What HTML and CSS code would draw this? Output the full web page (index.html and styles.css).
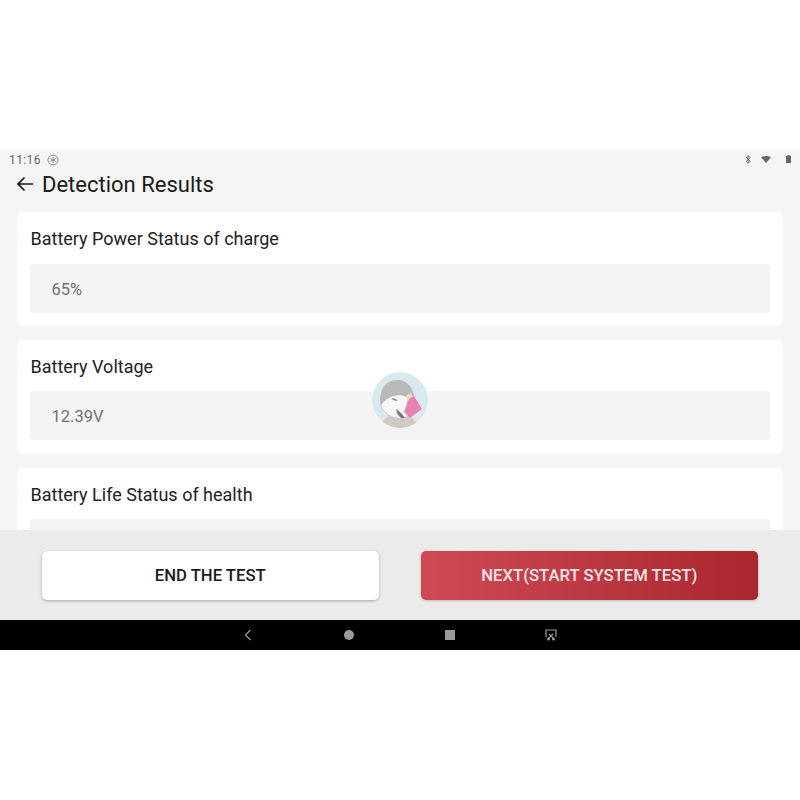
FILE: index.html
```html
<!DOCTYPE html>
<html lang="en">
<head>
  <meta charset="UTF-8" />
  <title>Detection Results</title>
  <meta name="viewport" content="width=device-width, initial-scale=1.0" />
  <link rel="stylesheet" href="styles.css">
</head>
<body>
  <div class="screen">

    <!-- Status bar -->
    <div class="status-bar">
      <div class="status-left">
        <span class="clock">11:16</span>
        <svg class="status-badge" width="12" height="12" viewBox="0 0 12 12">
          <circle cx="6" cy="6" r="5" fill="none" stroke="#888" stroke-width="1"/>
          <path d="M6 3v6M3.500 4.500l5 3M8.500 4.500l-5 3" stroke="#888" stroke-width="1" fill="none"/>
        </svg>
      </div>
      <div class="status-right">
        <svg width="6" height="9" viewBox="0 0 6 9"><path d="M1 2l4 4.500-2 2V.5l2 2L1 7" fill="none" stroke="#666" stroke-width="1"/></svg>
        <svg class="wifi-icon" width="10" height="7" viewBox="0 0 10 7"><path d="M0 1.200Q5-1 10 1.200L5 7z" fill="#666"/></svg>
        <svg width="5" height="8" viewBox="0 0 5 8"><path d="M0 1h1.500V0h2v1H5v7H0z" fill="#666"/></svg>
      </div>
    </div>

    <!-- Header -->
    <div class="header">
      <svg class="back-arrow" width="18" height="16" viewBox="0 0 18 16">
        <path d="M17 8H2M8.500 1.500 2 8l6.500 6.500" fill="none" stroke="#1a1a1a" stroke-width="1.700"/>
      </svg>
      <h1>Detection Results</h1>
    </div>

    <!-- Results -->
    <div class="results">
      <div class="card">
        <div class="card-title">Battery Power Status of charge</div>
        <div class="field">65%</div>
      </div>
      <div class="card">
        <div class="card-title">Battery Voltage</div>
        <div class="field">12.39V</div>
      </div>
      <div class="card">
        <div class="card-title">Battery Life Status of health</div>
        <div class="field"></div>
      </div>
    </div>

    <!-- Buttons -->
    <div class="footer">
      <button class="btn btn-white">END THE TEST</button>
      <button class="btn btn-red">NEXT(START SYSTEM TEST)</button>
    </div>

    <!-- Navigation -->
    <div class="nav-bar">
      <span class="nav-item">
        <svg width="8" height="12" viewBox="0 0 8 12"><path d="M6.500 1 1.500 6l5 5" fill="none" stroke="#999" stroke-width="1.200"/></svg>
      </span>
      <span class="nav-item"><span class="nav-dot"></span></span>
      <span class="nav-item"><span class="nav-square"></span></span>
      <span class="nav-item">
        <svg width="12" height="12" viewBox="0 0 12 12">
          <path d="M1 8V1h10v7" fill="none" stroke="#999" stroke-width="1.200"/>
          <path d="M4 5l4 4M8 5 4 9" stroke="#999" stroke-width="1.200"/>
          <circle cx="3.500" cy="10" r="1.500" fill="#999"/>
          <circle cx="8.500" cy="10" r="1.500" fill="#999"/>
        </svg>
      </span>
    </div>

    <!-- Watermark -->
    <svg class="watermark" width="56" height="56" viewBox="0 0 56 56">
      <defs><clipPath id="disc"><circle cx="28" cy="28" r="28"/></clipPath></defs>
      <g clip-path="url(#disc)">
        <circle cx="28" cy="28" r="28" fill="#d8e9f0"/>
        <path d="M9 56q1-10 9-12h18q8 2 9 12z" fill="#d0cbc2"/>
        <path d="M8 30Q8 9 25 8q13 0 17 15l-6 21H17Q9 38 8 30z" fill="#b9b9b7"/>
        <path d="M9 33q5-7 13-9 9-2 13 2l1 18-8 2q-15-1-19-13z" fill="#f8f7f5"/>
        <path d="M19 27q4-2 7 2-4 0-7-2z" fill="#8b9294"/>
        <path d="M34 24l5-3 2 5-4 8z" fill="#f3dfb4"/>
        <path d="M37 27l5-3 8 13-12 9-6-6z" fill="#ea80b4"/>
        <path d="M24 37q5 3 9 9l-4 0q-4-3-5-9z" fill="#77777a"/>
      </g>
    </svg>
  </div>
</body>
</html>
```

FILE: styles.css
```css
* { margin: 0; padding: 0; box-sizing: border-box; }

body {
  font-family: Roboto, 'Liberation Sans', sans-serif;
  background: #fff;
  padding-top: 150px;
}

.screen {
  position: relative;
  width: 800px;
  height: 500px;
  display: flex;
  flex-direction: column;
  background: #f5f5f5;
  overflow: hidden;
}

.status-bar {
  height: 20px;
  flex-shrink: 0;
  display: flex;
  justify-content: space-between;
  align-items: center;
  padding: 0 9.5px 0 9px;
  color: #666;
  font-size: 12px;
}

.status-left {
  display: flex;
  align-items: center;
  gap: 6px;
}

.clock { letter-spacing: 0.4px; }

.status-right {
  display: flex;
  align-items: center;
  gap: 10px;
  margin-bottom: 2px;
}

.wifi-icon { margin-right: 5px; }

.header {
  height: 28px;
  flex-shrink: 0;
  display: flex;
  align-items: center;
  gap: 8px;
  padding-left: 16px;
}

h1 {
  font-size: 22px;
  font-weight: 400;
  color: #1a1a1a;
}

.results {
  flex: 1;
  min-height: 0;
  overflow: hidden;
  display: flex;
  flex-direction: column;
  gap: 13.75px;
  padding: 14px 17px 0;
}

.card {
  flex-shrink: 0;
  height: 114px;
  background: #fff;
  border-radius: 7px;
  padding: 0 13px;
}

.card-title {
  height: 51.5px;
  display: flex;
  align-items: center;
  padding: 2px 0 0 0.5px;
  font-size: 18px;
  color: #222;
}

.field {
  height: 49px;
  display: flex;
  align-items: center;
  padding: 2px 0 0 21.5px;
  background: #f4f4f4;
  border-radius: 3px;
  font-size: 16.5px;
  color: #707070;
}

.footer {
  height: 90px;
  flex-shrink: 0;
  display: flex;
  justify-content: space-between;
  align-items: center;
  padding: 0 42px 0 41.5px;
  background: #ebebeb;
}

.btn {
  width: 337.5px;
  height: 49px;
  border: none;
  border-radius: 5px;
  font-family: inherit;
  font-size: 16.7px;
  font-weight: 500;
}

.btn-white {
  background: #fff;
  color: #1a1a1a;
  box-shadow: 0 1px 3px rgba(0, 0, 0, 0.3);
}

.btn-red {
  background: linear-gradient(90deg, #d04a55, #a9272f);
  color: #fbe6e8;
  box-shadow: 0 1px 3px rgba(0, 0, 0, 0.2);
}

.nav-bar {
  height: 30px;
  flex-shrink: 0;
  display: flex;
  align-items: center;
  justify-content: center;
  gap: 89px;
  padding-right: 1px;
  background: #000;
}

.nav-item {
  width: 12px;
  height: 12px;
  display: flex;
  align-items: center;
  justify-content: center;
}

.nav-dot {
  width: 10px;
  height: 10px;
  border-radius: 50%;
  background: #999;
}

.nav-square {
  width: 10px;
  height: 10px;
  background: #999;
}

.watermark {
  position: absolute;
  left: 372px;
  top: 222px;
  filter: blur(0.4px);
}
```
